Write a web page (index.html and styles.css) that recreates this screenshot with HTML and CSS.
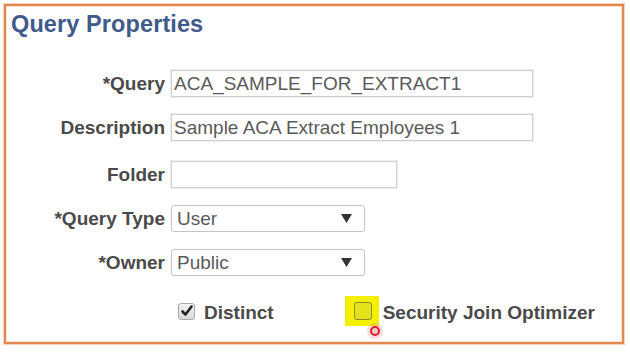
FILE: index.html
```html
<!DOCTYPE html>
<html>
<head>
<meta charset="utf-8">
<link rel="stylesheet" href="styles.css">
</head>
<body>
<div class="panel">
  <h1 class="title">Query Properties</h1>
  <div class="form">
    <div class="row">
      <label class="lbl">*Query</label>
      <input class="txt wide" type="text" value="ACA_SAMPLE_FOR_EXTRACT1">
    </div>
    <div class="row row-desc">
      <label class="lbl">Description</label>
      <input class="txt wide" type="text" value="Sample ACA Extract Employees 1">
    </div>
    <div class="row">
      <label class="lbl">Folder</label>
      <input class="txt mid" type="text" value="">
    </div>
    <div class="row">
      <label class="lbl">*Query Type</label>
      <div class="select"><span class="sel-text">User</span><svg class="arrow" width="11" height="9" viewBox="0 0 11 9"><path d="M0 0 H11 L5.5 9 Z" fill="#333"/></svg></div>
    </div>
    <div class="row">
      <label class="lbl">*Owner</label>
      <div class="select"><span class="sel-text">Public</span><svg class="arrow" width="11" height="9" viewBox="0 0 11 9"><path d="M0 0 H11 L5.5 9 Z" fill="#333"/></svg></div>
    </div>
    <div class="checks">
      <div class="check">
        <span class="box checked"><svg width="14" height="14" viewBox="0 0 14 14"><path d="M2.5 7.5 L5.5 10.5 L11.5 2.5" fill="none" stroke="#222" stroke-width="2.6" stroke-linecap="round" stroke-linejoin="round"/></svg></span>
        <span class="check-text">Distinct</span>
      </div>
      <div class="check sec">
        <span class="hl"><span class="box empty"></span></span>
        <span class="check-text">Security Join Optimizer</span>
        <span class="click-dot"></span>
      </div>
    </div>
  </div>
</div>
</body>
</html>
```
FILE: styles.css
```css
html, body {
  margin: 0;
  padding: 0;
  background: #ffffff;
}
body {
  font-family: "Liberation Sans", Arial, sans-serif;
  width: 630px;
  height: 352px;
  overflow: hidden;
}
.panel {
  box-sizing: border-box;
  margin: 4px 0 0 4px;
  width: 620px;
  height: 340px;
  border: 2px solid #e4874f;
  box-shadow: 0 0 0 1px #f7d2b6, inset 0 0 0 1px #fbe3d2;
  padding: 4px 0 0 5px;
  position: relative;
}
.title {
  margin: 0;
  font-size: 23.5px;
  line-height: 28px;
  font-weight: bold;
  color: #3f5b8b;
  letter-spacing: 0.1px;
}
.form {
  margin-top: 32px;
}
.row {
  display: flex;
  align-items: center;
  height: 27px;
  margin-bottom: 17px;
}
.row-desc {
  margin-bottom: 20px;
}
.lbl {
  box-sizing: border-box;
  width: 159px;
  margin-left: -5px;
  text-align: right;
  font-size: 19px;
  font-weight: bold;
  color: #4a4a4a;
  margin-right: 6px;
  white-space: nowrap;
}
.txt {
  box-sizing: border-box;
  height: 27px;
  border: 1px solid #cfcfcf;
  box-shadow: 0 0 0 1px #efefef;
  padding: 0 0 0 2px;
  margin: 0;
  font-family: "Liberation Sans", Arial, sans-serif;
  font-size: 19px;
  color: #5a5a5a;
  background: #fff;
  outline: none;
}
.wide { width: 362px; }
.mid { width: 226px; }
.select {
  box-sizing: border-box;
  width: 194px;
  height: 27px;
  border: 1px solid #c4c4c4;
  border-radius: 3px;
  display: flex;
  align-items: center;
  justify-content: space-between;
  padding: 0 12px 0 5px;
  background: #fff;
}
.sel-text {
  font-size: 19px;
  color: #5a5a5a;
}
.arrow { display: block; }
.checks {
  display: flex;
  align-items: center;
  height: 30px;
  margin-top: 20px;
  padding-left: 167px;
}
.check {
  display: flex;
  align-items: center;
  position: relative;
}
.box {
  box-sizing: border-box;
  width: 17px;
  height: 17px;
  border-radius: 3px;
  display: flex;
  align-items: center;
  justify-content: center;
}
.box.checked {
  border: 1px solid #a9a9a9;
  background: linear-gradient(#f2f2f2, #d9d9d9);
}
.check-text {
  font-size: 19px;
  font-weight: bold;
  color: #4a4a4a;
  margin-left: 9px;
  line-height: 22px;
  padding-top: 3px;
}
.sec {
  margin-left: 71px;
}
.hl {
  width: 34px;
  height: 30px;
  background: #f4f000;
  display: flex;
  align-items: center;
  justify-content: center;
}
.box.empty {
  width: 18px;
  height: 18px;
  border: 1px solid #8d8a30;
  background: #e4e21a;
  border-radius: 3px;
  margin-left: 2px;
}
.sec .check-text {
  margin-left: 4px;
}
.click-dot {
  position: absolute;
  left: 25px;
  top: 30px;
  width: 6px;
  height: 6px;
  border: 2px solid #d8202c;
  border-radius: 50%;
  background: #f6c8c8;
  box-shadow: 0 0 0 3px rgba(240, 150, 160, 0.35);
}
```
